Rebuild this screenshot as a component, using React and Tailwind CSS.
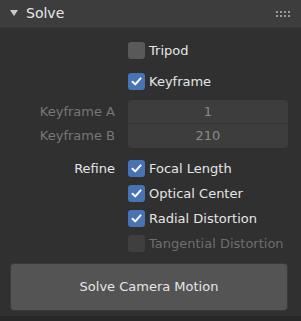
import React from 'react';

function Check({ checked, disabled }) {
  if (checked) {
    return (
      <div className="w-[17px] h-[17px] rounded-[3px] bg-[#4772b3] flex items-center justify-center shrink-0">
        <svg width="13" height="13" viewBox="0 0 13 13">
          <path d="M2.5 6.8 L5.2 9.4 L10.6 3.4" fill="none" stroke="#ffffff" strokeWidth="2" strokeLinecap="round" strokeLinejoin="round" />
        </svg>
      </div>
    );
  }
  return (
    <div
      className={
        disabled
          ? 'w-[17px] h-[17px] rounded-[3px] bg-[#3f3f3f] shrink-0'
          : 'w-[17px] h-[17px] rounded-[3px] bg-[#595959] shrink-0'
      }
    />
  );
}

function Row({ label, checked, disabled, text }) {
  return (
    <div className="flex items-center h-[25px]">
      <div className="w-[115px] text-right text-[#e6e6e6]">{label}</div>
      <div className="ml-[13px] flex items-center gap-[4px]">
        <Check checked={checked} disabled={disabled} />
        <span className={disabled ? 'text-[#6e6e6e]' : 'text-[#e6e6e6]'}>{text}</span>
      </div>
    </div>
  );
}

export default function App() {
  return (
    <div
      className="w-[301px] h-[321px] bg-[#282828] text-[13px] overflow-hidden"
      style={{ fontFamily: '"DejaVu Sans", sans-serif' }}
    >
      <div className="h-[28px] bg-[#3d3d3d] flex items-center border-b border-[#363636]">
        <svg width="8" height="7" viewBox="0 0 8 7" className="ml-[10px]">
          <polygon points="0,0 8,0 4,6" fill="#cccccc" />
        </svg>
        <span className="ml-[8px] text-[14px] text-[#e8e8e8]">Solve</span>
        <div className="ml-auto mr-[11px] grid grid-cols-4 gap-x-[2px] gap-y-[2px]">
          {Array.from({ length: 8 }).map((_, i) => (
            <div key={i} className="w-[2px] h-[2px] bg-[#9a9a9a]" />
          ))}
        </div>
      </div>

      <div className="bg-[#303030] h-[288px] pt-[10px]">
        <Row label="" text="Tripod" />
        <div className="mt-[6px]">
          <Row label="" checked text="Keyframe" />
        </div>

        <div className="mt-[6px] flex">
          <div className="w-[115px] flex flex-col text-right text-[#777777]">
            <div className="h-[24px] leading-[24px]">Keyframe A</div>
            <div className="h-[24px] leading-[24px]">Keyframe B</div>
          </div>
          <div className="ml-[13px] w-[160px] rounded-[4px] bg-[#3d3d3d] text-[#8a8a8a] text-center overflow-hidden">
            <div className="h-[24px] leading-[24px] border-b border-[#353535]">1</div>
            <div className="h-[24px] leading-[23px]">210</div>
          </div>
        </div>

        <div className="mt-[8px]">
          <Row label="Refine" checked text="Focal Length" />
          <Row label="" checked text="Optical Center" />
          <Row label="" checked text="Radial Distortion" />
          <Row label="" disabled text="Tangential Distortion" />
        </div>

        <div className="mt-[7px] ml-[10px] w-[278px] h-[48px] rounded-[4px] bg-[#545454] border border-[#3a3a3a] flex items-center justify-center text-[#e6e6e6]">
          Solve Camera Motion
        </div>
      </div>
    </div>
  );
}
